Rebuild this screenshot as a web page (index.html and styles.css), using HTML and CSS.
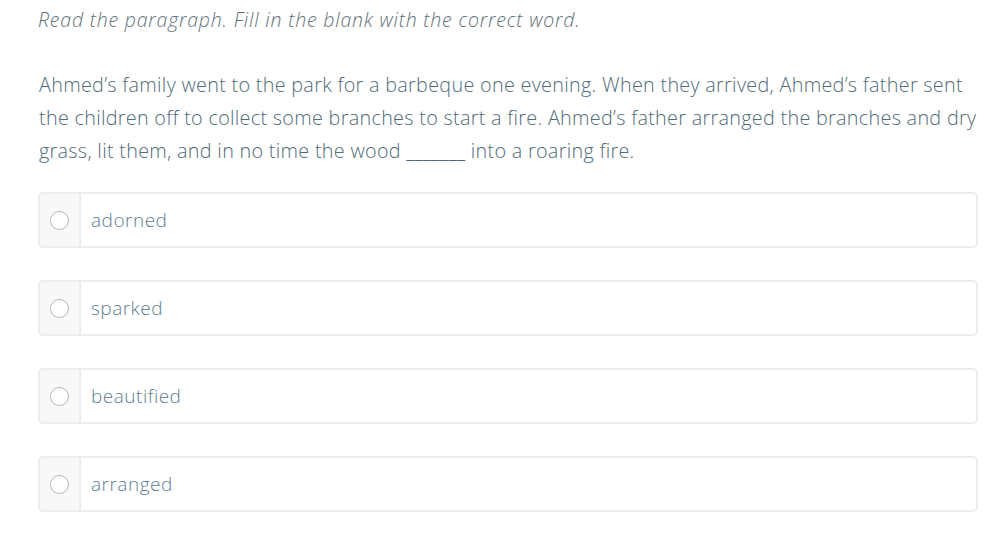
FILE: index.html
```html
<!DOCTYPE html>
<html lang="en">
<head>
<meta charset="utf-8">
<title>Fill in the blank</title>
<link rel="stylesheet" href="styles.css">
</head>
<body>
<main class="question">
  <p class="instruction">Read the paragraph. Fill in the blank with the correct word.</p>
  <p class="passage">Ahmed’s family went to the park for a barbeque one evening. When they arrived, Ahmed’s father sent the children off to collect some branches to start a fire. Ahmed’s father arranged the branches and dry grass, lit them, and in no time the wood _______ into a roaring fire.</p>
  <ul class="options">
    <li class="option"><span class="radio-cell"><span class="radio"></span></span><span class="label">adorned</span></li>
    <li class="option"><span class="radio-cell"><span class="radio"></span></span><span class="label">sparked</span></li>
    <li class="option"><span class="radio-cell"><span class="radio"></span></span><span class="label">beautified</span></li>
    <li class="option"><span class="radio-cell"><span class="radio"></span></span><span class="label">arranged</span></li>
  </ul>
</main>
</body>
</html>
```
FILE: styles.css
```css
html, body {
  margin: 0;
  padding: 0;
  background: #ffffff;
}

.question {
  padding: 0 12px 0 38px;
  font-family: "Open Sans", "Noto Sans", sans-serif;
  font-weight: 300;
  color: #516b7a;
}

.instruction {
  margin: 0;
  padding-top: 6px;
  font-style: italic;
  font-size: 19.5px;
  line-height: 28px;
  color: #62727a;
  letter-spacing: 0.8px;
}

.passage {
  margin: 34px 0 0 0;
  padding-left: 1px;
  font-size: 19.8px;
  line-height: 33px;
  letter-spacing: 0.3px;
}

.options {
  list-style: none;
  margin: 25px 0 0 0;
  padding: 0;
  display: flex;
  flex-direction: column;
  gap: 32px;
  width: 940px;
}

.option {
  display: flex;
  height: 56px;
  box-sizing: border-box;
  border: 2px solid #ededed;
  border-radius: 5px;
  overflow: hidden;
}

.radio-cell {
  width: 39px;
  flex: none;
  background: #f8f8f8;
  border-right: 2px solid #ededed;
  display: flex;
  align-items: center;
  justify-content: center;
}

.radio {
  width: 17px;
  height: 17px;
  border: 1px solid #b9b9b9;
  border-radius: 50%;
  background: #ffffff;
}

.label {
  display: flex;
  align-items: center;
  padding-left: 10px;
  font-size: 19px;
  color: #5e8093;
  letter-spacing: 0.5px;
}
```
